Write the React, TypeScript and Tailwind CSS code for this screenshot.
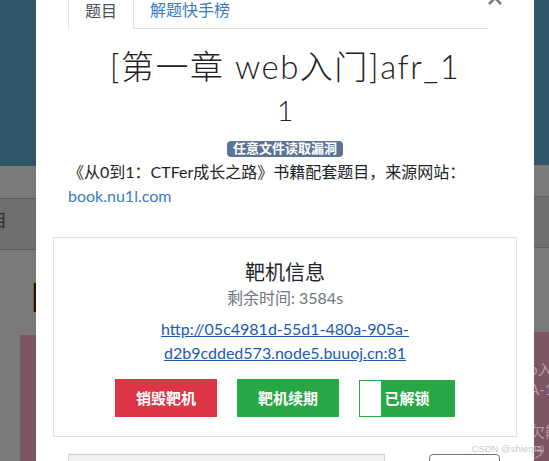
import React from "react";

const sideBands = "flex flex-col";

function LeftStrip() {
  return (
    <div className={`${sideBands} w-[36px] shrink-0 overflow-hidden`}>
      <div className="h-[166px] bg-[#2f5567]" />
      <div className="h-[32px] bg-[#7a7a7a]" />
      <div className="h-[51px] border-t border-[#5f5f5f] bg-[#6f6f6f] pt-[10px]">
        <div className="ml-[-10px] text-[17px] leading-6 text-[#2e2e2e]">目</div>
      </div>
      <div className="flex h-[86px] justify-end border-t border-[#5f5f5f] bg-[#7a7a7a]">
        <div className="mt-[33px] h-[29px] w-[3px] border-l border-[#8a5a2c] bg-[#171717]" />
      </div>
      <div className="flex flex-1">
        <div className="w-[20px] bg-[#7a7a7a]" />
        <div className="flex-1 bg-[#7d5563]" />
      </div>
    </div>
  );
}

function RightStrip() {
  return (
    <div className={`${sideBands} flex-1 overflow-hidden`}>
      <div className="h-[166px] bg-[#2f5567]" />
      <div className="h-[32px] bg-[#7a7a7a]" />
      <div className="h-[51px] border-t border-[#5f5f5f] bg-[#6f6f6f]" />
      <div className="h-[86px] border-t border-[#5f5f5f] bg-[#7a7a7a]" />
      <div className="flex-1 whitespace-nowrap bg-[#7d5563] pt-[27px] text-[15px] leading-5 text-[#b899a4]">
        <div className="ml-[-5px]">o入</div>
        <div className="ml-[-5px]">A-1</div>
        <div className="ml-[-4px] mt-[22px]">欠能</div>
        <div className="ml-[-4px]">ラ</div>
      </div>
    </div>
  );
}

function TargetBox() {
  return (
    <div className="mx-[17px] mt-[29px] border border-[#dee2e6] pb-[19px] pt-[22px] text-center">
      <div className="text-[20px] leading-6 text-[#212529]">靶机信息</div>
      <div className="mt-[2px] text-[16px] leading-6 text-[#6c757d]">剩余时间: 3584s</div>
      <div className="mx-auto mt-[7px] w-[280px] text-[16px] leading-6">
        <a href="#" className="text-[#1a5ab0] underline">
          http://05c4981d-55d1-480a-905a-d2b9cdded573.node5.buuoj.cn:81
        </a>
      </div>
      <div className="mt-[14px] flex items-start justify-center gap-[20px] text-[15px] font-bold text-white">
        <button type="button" className="flex h-[38px] w-[102px] items-center justify-center bg-[#dc3545]">
          销毁靶机
        </button>
        <button type="button" className="flex h-[38px] w-[102px] items-center justify-center bg-[#28a745]">
          靶机续期
        </button>
        <button
          type="button"
          className="relative mt-[1px] flex h-[37px] w-[96px] items-center justify-center border border-[#28a745] bg-[#28a745]"
        >
          <span className="absolute inset-y-0 left-0 w-[21px] bg-white" />
          <span className="relative">已解锁</span>
        </button>
      </div>
    </div>
  );
}

export default function App() {
  return (
    <div className="relative flex h-[461px] w-[549px] overflow-hidden bg-white font-['Lato','Noto_Sans_CJK_SC',sans-serif]">
      <LeftStrip />

      <div className="relative w-[498px] shrink-0 bg-white">
        <svg
          className="absolute left-[451px] top-[-10px]"
          width="16"
          height="16"
          viewBox="0 0 16 16"
          aria-hidden
        >
          <path d="M2 2 L14 14 M14 2 L2 14" stroke="#7d7d7d" strokeWidth="2.6" />
        </svg>

        <nav className="ml-[32px] mr-[46px] mt-[-10px] flex border-b border-[#dee2e6] text-[16px] leading-6">
          <span className="-mb-px rounded-t border border-b-0 border-[#dee2e6] bg-white px-4 pb-[6px] pt-[8px] text-[#495057]">
            题目
          </span>
          <span className="px-4 pb-[5px] pt-[8px] text-[#3a7bc0]">解题快手榜</span>
        </nav>

        <div className="px-[32px]">
          <h3 className="mt-[18px] text-center text-[33px] font-light leading-[38px] tracking-[1.5px] text-[#222]">
            [第一章 web入门]afr_1
          </h3>
          <h4 className="mt-[8px] text-center text-[28px] font-light leading-[34px] text-[#222]">1</h4>
          <div className="mt-[14px] flex justify-center">
            <span className="flex h-[16px] items-center rounded-[4px] bg-[#5d7594] px-[6px] text-[13px] font-bold text-white">
              任意文件读取漏洞
            </span>
          </div>
          <p className="mt-[3px] text-[16px] leading-6 text-[#212529]">
            《从0到1：CTFer成长之路》书籍配套题目，来源网站：
            <a href="#" className="text-[#3a7bc0]">
              book.nu1l.com
            </a>
          </p>
        </div>

        <TargetBox />

        <div className="mt-[17px] flex px-[32px]">
          <div className="h-[38px] w-[317px] border border-[#ced4da] bg-[#eef0f2]" />
          <div className="ml-[44px] h-[38px] w-[71px] rounded-t border border-[#6c757d]" />
        </div>
      </div>

      <RightStrip />

      <div className="absolute right-[5px] top-[443px] font-['Liberation_Sans',sans-serif] text-[9.5px] leading-[12px] text-[rgba(190,190,190,0.85)]">
        CSDN @shierpai
      </div>
    </div>
  );
}
